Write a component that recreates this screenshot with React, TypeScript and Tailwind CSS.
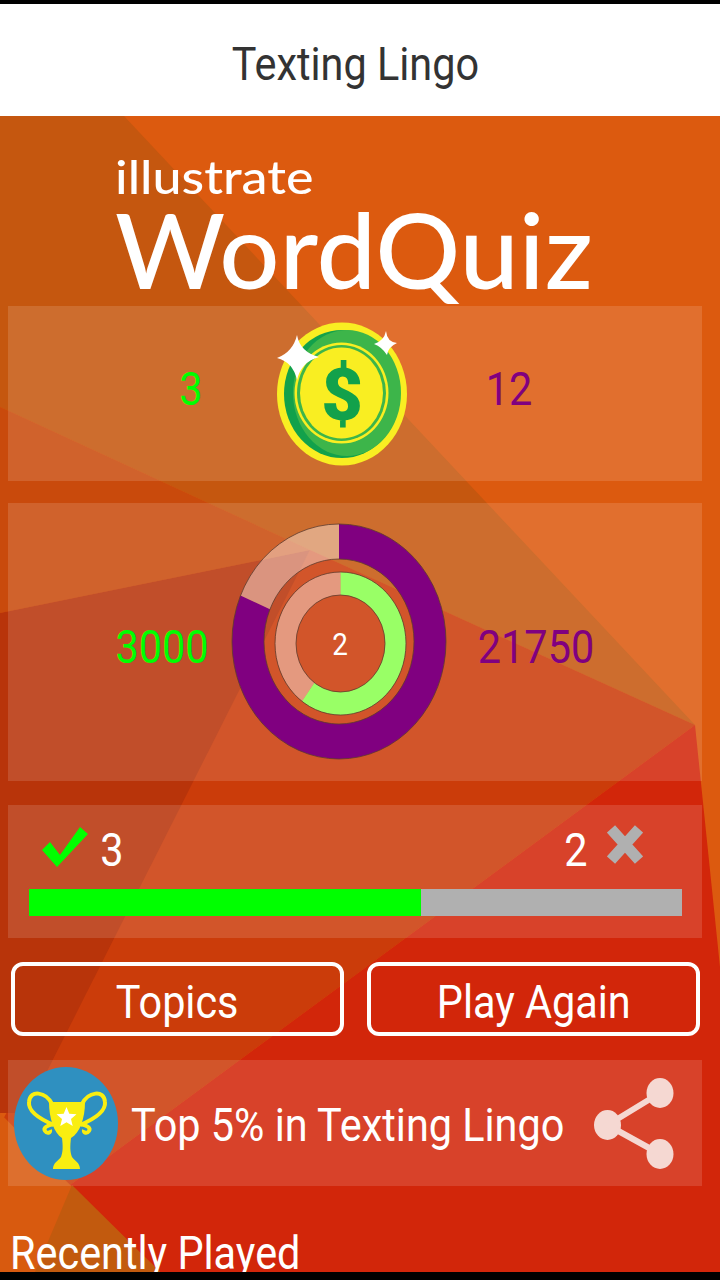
import React from "react";

const label = "block font-['Roboto',sans-serif] text-[46px] leading-none scale-x-[0.9]";

// ring segment on an ellipse, angles are clockwise degrees from 12 o'clock
const ringSegment = (
  cx: number,
  cy: number,
  rx: number,
  ry: number,
  irx: number,
  iry: number,
  from: number,
  to: number
) => {
  const pt = (a: number, x: number, y: number) => {
    const r = (a * Math.PI) / 180;
    return `${(cx + x * Math.sin(r)).toFixed(2)} ${(cy - y * Math.cos(r)).toFixed(2)}`;
  };
  const large = to - from > 180 ? 1 : 0;
  return `M${pt(from, rx, ry)}A${rx} ${ry} 0 ${large} 1 ${pt(to, rx, ry)}L${pt(to, irx, iry)}A${irx} ${iry} 0 ${large} 0 ${pt(from, irx, iry)}Z`;
};

const Background = () => (
  <svg className="absolute inset-0" width="720" height="1156" viewBox="0 116 720 1156">
    <rect x="0" y="116" width="720" height="1156" fill="#dc5a0f" />
    <polygon points="0,116 124,116 695,725 310,550 0,407" fill="#c5570f" />
    <polygon points="0,407 310,550 0,613" fill="#c94a0c" />
    <polygon points="310,550 695,725 70,1185 0,1125" fill="#cb3c0a" />
    <polygon points="0,613 310,550 26,1113 0,1113" fill="#b8340a" />
    <polygon points="695,725 720,967 720,1272 160,1272 70,1185" fill="#d2260a" />
    <polygon points="0,1113 70,1185 160,1272 0,1272" fill="#d85a0f" />
    <polygon points="72,1185 160,1272 35,1272" fill="#c25a0e" />
  </svg>
);

const Coin = () => (
  <svg width="140" height="156" viewBox="269 316 140 156" className="ml-[28px] shrink-0">
    <ellipse cx="342" cy="394" rx="65" ry="71.5" fill="#f9ee22" />
    <ellipse cx="342" cy="394" rx="58" ry="64" fill="#12a14b" />
    <ellipse cx="347" cy="393" rx="54" ry="63" fill="#3db54a" />
    <ellipse cx="341.5" cy="393" rx="47" ry="50.5" fill="#f9ee22" />
    <ellipse cx="341.5" cy="393" rx="44.5" ry="48" fill="#3db54a" />
    <ellipse cx="341.5" cy="393" rx="41.5" ry="45.5" fill="#f9ee22" />
    <text
      x="342"
      y="420"
      textAnchor="middle"
      fontSize="72"
      fontWeight="900"
      fill="#12a14b"
      className="font-['Roboto',sans-serif]"
    >
      $
    </text>
    <path d="M297 335Q300 352 319 357Q301 362 297 380Q293 362 277 358Q293 352 297 335Z" fill="#fff" />
    <path d="M386 331Q387 342 397 343Q388 347 387 355Q382 347 374 344Q384 341 386 331Z" fill="#fff" />
  </svg>
);

const Donut = () => (
  <svg width="230" height="250" viewBox="224 518 230 250" className="ml-[2px] shrink-0">
    <path d={ringSegment(339, 642.5, 107, 117.5, 75, 82.5, 0, 293)} fill="#800080" />
    <path d={ringSegment(339, 642.5, 107, 117.5, 75, 82.5, 293, 360)} fill="#fff" fillOpacity="0.4" />
    <path d={ringSegment(340.5, 644.5, 65.5, 71.5, 44.5, 48.5, 0, 216)} fill="#99ff66" />
    <path d={ringSegment(340.5, 644.5, 65.5, 71.5, 44.5, 48.5, 216, 360)} fill="#fff" fillOpacity="0.4" />
    <g fill="none" stroke="#5f3b2c" strokeWidth="1" strokeOpacity="0.8">
      <ellipse cx="339" cy="642.5" rx="107" ry="117.5" />
      <ellipse cx="339" cy="642.5" rx="75" ry="82.5" />
      <ellipse cx="340.5" cy="644.5" rx="65.5" ry="71.5" />
      <ellipse cx="340.5" cy="644.5" rx="44.5" ry="48.5" />
    </g>
    <text
      transform="translate(340 656) scale(0.87 1)"
      textAnchor="middle"
      fontSize="32"
      fill="#fff"
      className="font-['Roboto',sans-serif]"
    >
      2
    </text>
  </svg>
);

const Trophy = () => (
  <svg width="104" height="113" viewBox="14 1067 104 113" className="shrink-0">
    <ellipse cx="66" cy="1123.5" rx="52" ry="56.5" fill="#2f90c0" />
    <g fill="none" stroke="#f9ee11" strokeWidth="4">
      <path d="M52 1104C46 1092 30 1089 29 1102C28 1112 42 1120 54 1125" />
      <path d="M82 1104C88 1092 104 1089 105 1102C106 1112 92 1120 80 1125" />
      <path d="M54 1124C47 1125 43 1128 45 1131C47 1134 51 1133 50 1130" />
      <path d="M80 1124C87 1125 91 1128 89 1131C87 1134 83 1133 84 1130" />
    </g>
    <path
      d="M49 1102H85C85 1118 80 1133 71 1138C70 1146 70 1152 72 1157C75 1161 80 1163 80 1169H53C53 1163 58 1161 61 1157C63 1152 63 1146 62 1138C54 1133 49 1118 49 1102Z"
      fill="#f9ee11"
    />
    <polygon
      points="66.5,1107 69.3,1113.7 76.5,1114.3 71,1119 72.7,1126 66.5,1122.3 60.3,1126 62,1119 56.5,1114.3 63.7,1113.7"
      fill="#fff"
    />
  </svg>
);

const Share = () => (
  <svg width="82" height="93" viewBox="594 1076 82 93" className="ml-auto mr-[26px] shrink-0">
    <g fill="#f5d8d2">
      <ellipse cx="660" cy="1092" rx="13.5" ry="15" />
      <ellipse cx="607.5" cy="1124" rx="13.5" ry="15" />
      <ellipse cx="660" cy="1153" rx="13.5" ry="15" />
    </g>
    <path d="M660 1092L607.5 1124L660 1153" fill="none" stroke="#f5d8d2" strokeWidth="6" />
  </svg>
);

const Logo = () => (
  <div className="h-[190px] pl-[107px] text-white font-medium font-['Lato',sans-serif]">
    <span className="block pt-[41px] text-[46px] leading-[40px] origin-left scale-x-[1.13]">illustrate</span>
    <span className="block pt-[2px] text-[104px] leading-[100px] origin-left scale-x-[1.02]">WordQuiz</span>
  </div>
);

export default function App() {
  return (
    <div className="w-[720px] h-[1280px] flex flex-col bg-black pt-1 pb-2 overflow-hidden">
      <header className="h-[112px] shrink-0 flex items-center justify-center pt-[8px] pr-[10px] bg-white text-[#333]">
        <span className={label}>Texting Lingo</span>
      </header>

      <main className="relative h-[1156px] overflow-hidden">
        <Background />
        <div className="relative flex flex-col px-2">
          <Logo />

          <section className="w-[694px] h-[175px] flex items-center bg-white/[0.13]">
            <span className={`${label} ml-[133px] w-[100px] text-center text-[#00ff00] pb-[10px]`}>3</span>
            <Coin />
            <span className={`${label} ml-[50px] w-[100px] text-center text-[#800080] pb-[10px]`}>12</span>
          </section>

          <section className="w-[694px] h-[278px] mt-[22px] flex items-center bg-white/[0.13]">
            <span className={`${label} ml-[94px] w-[120px] text-center text-[#00ff00] pt-[10px]`}>3000</span>
            <Donut />
            <span className={`${label} ml-[12px] w-[140px] text-center text-[#800080] pt-[10px]`}>21750</span>
          </section>

          <section className="w-[694px] h-[133px] mt-6 flex flex-col pl-[21px] pr-[20px] bg-white/[0.13]">
            <div className="h-[84px] flex items-center">
              <svg width="46" height="40" viewBox="42 822 46 40" className="ml-[13px] shrink-0">
                <polygon points="42,845 50,837 60,850 80,822 88,829 57,862" fill="#00ff00" />
              </svg>
              <span className={`${label} w-[40px] ml-[4px] text-center text-white pt-[6px]`}>3</span>
              <span className={`${label} w-[40px] ml-auto text-center text-white pt-[6px]`}>2</span>
              <svg width="36" height="39" viewBox="0 0 36 39" className="ml-[11px] mr-[39px] mt-[-6px] shrink-0">
                <path d="M4 4L32 35M32 4L4 35" stroke="#b0b0b0" strokeWidth="11" fill="none" />
              </svg>
            </div>
            <div className="h-[27px] flex bg-[#b0b0b0]">
              <div className="w-3/5 bg-[#00ff00]" />
            </div>
          </section>

          <div className="flex gap-[23px] mt-6 ml-[3px]">
            <button className="w-[333px] h-[74px] flex items-center justify-center pt-[5px] border-4 border-white rounded-xl text-white">
              <span className={label}>Topics</span>
            </button>
            <button className="w-[333px] h-[74px] flex items-center justify-center pt-[5px] border-4 border-white rounded-xl text-white">
              <span className={label}>Play Again</span>
            </button>
          </div>

          <section className="w-[694px] h-[126px] mt-6 flex items-center pl-[6px] bg-white/[0.13]">
            <Trophy />
            <span className={`${label} ml-[13px] pt-[4px] origin-left w-[432px] whitespace-nowrap text-white`}>
              Top 5% in Texting Lingo
            </span>
            <Share />
          </section>

          <span className={`${label} origin-left mt-[44px] ml-[2px] whitespace-nowrap text-white`}>
            Recently Played
          </span>
        </div>
      </main>
    </div>
  );
}
